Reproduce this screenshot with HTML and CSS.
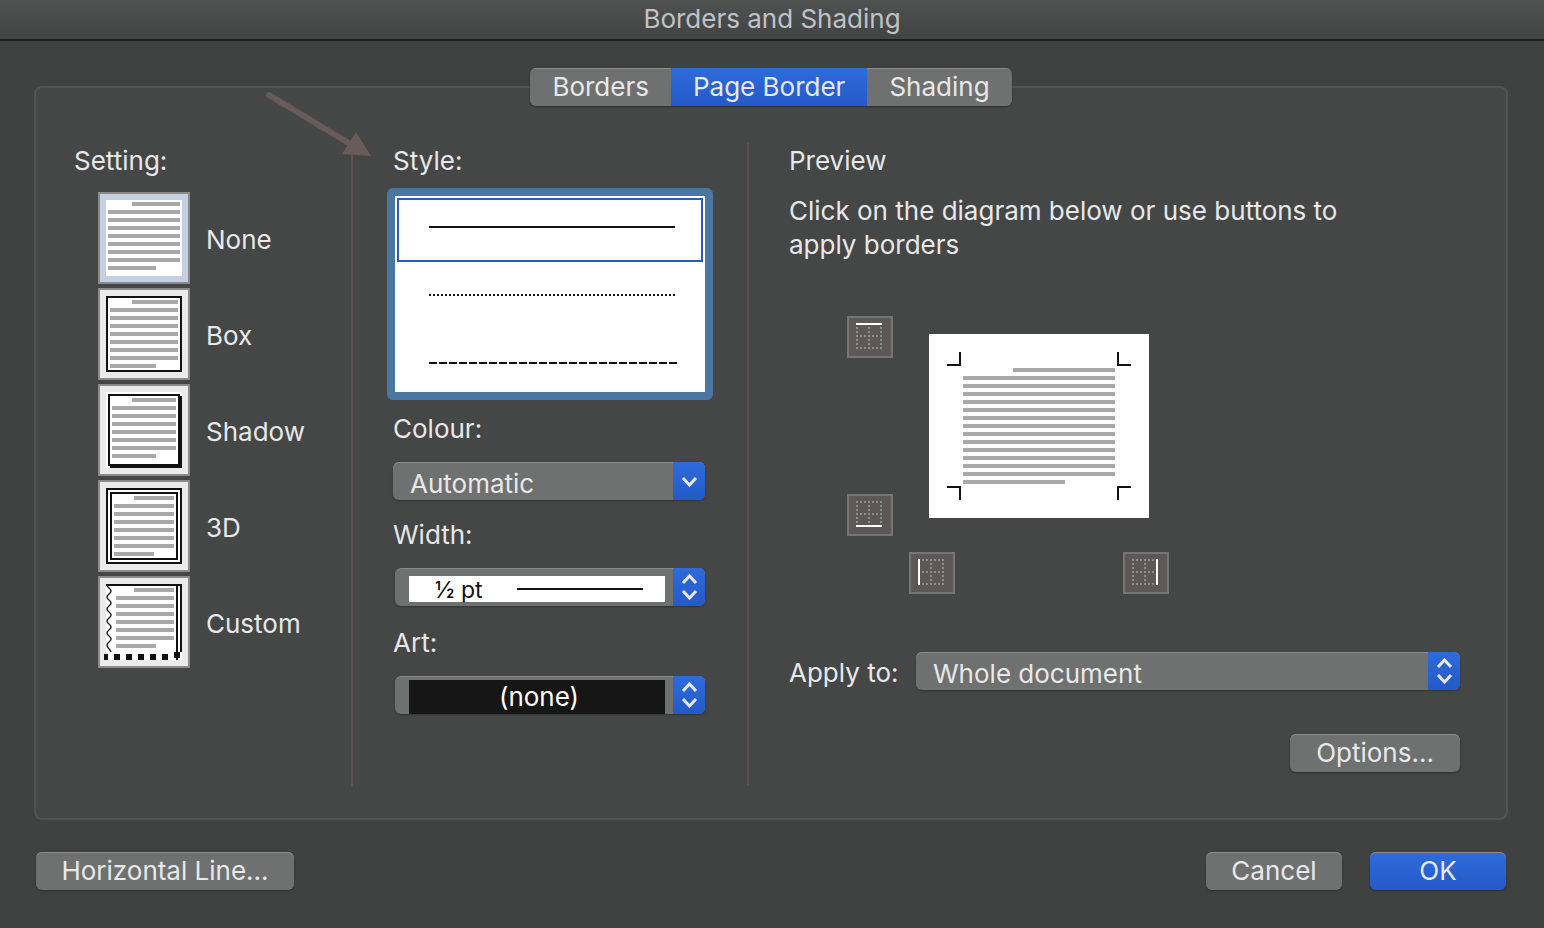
FILE: index.html
```
<!DOCTYPE html>
<html lang="en">
<head>
  <meta charset="UTF-8">
  <meta name="viewport" content="width=device-width, initial-scale=1.0">
  <title>Borders and Shading</title>
  <link rel="stylesheet" href="styles.css">
</head>
<body>
  <!-- Shared icons -->
  <svg class="sprite" aria-hidden="true">
    <symbol id="updown" viewBox="0 0 32 38">
      <path d="M10 15L16.500 8L23 15M10 23L16.500 30L23 23"/>
    </symbol>
    <symbol id="down" viewBox="0 0 32 38">
      <path d="M10 16L16.500 23L23 16"/>
    </symbol>
    <symbol id="cells" viewBox="0 0 46 42">
      <path d="M9 8H35M9 20H35M9 32H35M10 7V33M22 7V33M34 7V33" stroke="#8e8e8e" stroke-width="2" stroke-dasharray="2 2"/>
    </symbol>
  </svg>

  <header class="titlebar">
    <h1>Borders and Shading</h1>
  </header>

  <main>
    <div class="tabs" role="tablist">
      <button type="button" class="tab" role="tab">Borders</button>
      <button type="button" class="tab active" role="tab" aria-selected="true">Page Border</button>
      <button type="button" class="tab" role="tab">Shading</button>
    </div>

    <div class="panel">
      <svg class="pointer" viewBox="0 0 110 70" aria-hidden="true">
        <path d="M6 7L84 54" stroke="#685b59" stroke-width="6" stroke-linecap="round"/>
        <path d="M108 68L93 44L79 66Z" fill="#685b59"/>
      </svg>

      <section class="column settings">
        <h2>Setting:</h2>
        <div class="setting-list">
          <label class="setting">
            <input type="radio" name="setting" checked>
            <svg viewBox="0 0 92 92" class="thumb selected">
              <path d="M8 8H84V84H8Z" fill="#fff"/>
              <g stroke="#a9a9a9">
                <path d="M34 12H82M10 76H58" stroke-width="4"/>
                <path d="M46 18V70" stroke-width="72" stroke-dasharray="4 4"/>
              </g>
            </svg>
            <span>None</span>
          </label>
          <label class="setting">
            <input type="radio" name="setting">
            <svg viewBox="0 0 92 92" class="thumb">
              <path d="M9 9H83V83H9Z" fill="#fff" stroke="#111" stroke-width="2"/>
              <g stroke="#a9a9a9">
                <path d="M34 14H80M12 78H58" stroke-width="4"/>
                <path d="M46 20V72" stroke-width="68" stroke-dasharray="4 4"/>
              </g>
            </svg>
            <span>Box</span>
          </label>
          <label class="setting">
            <input type="radio" name="setting">
            <svg viewBox="0 0 92 92" class="thumb">
              <path d="M8 8H84V84H8Z" fill="#fff"/>
              <path d="M12 12H84V84H12Z" fill="#111"/>
              <path d="M11 11H81V81H11Z" fill="#fff" stroke="#111" stroke-width="2"/>
              <g stroke="#a9a9a9">
                <path d="M34 16H78M14 72H58" stroke-width="4"/>
                <path d="M46 22V66" stroke-width="64" stroke-dasharray="4 4"/>
              </g>
            </svg>
            <span>Shadow</span>
          </label>
          <label class="setting">
            <input type="radio" name="setting">
            <svg viewBox="0 0 92 92" class="thumb">
              <path d="M9 9H83V83H9ZM13 13H79V79H13Z" fill="#fff" stroke="#111" stroke-width="2"/>
              <g stroke="#a9a9a9">
                <path d="M36 18H76M16 74H56" stroke-width="4"/>
                <path d="M46 24V68" stroke-width="60" stroke-dasharray="4 4"/>
              </g>
            </svg>
            <span>3D</span>
          </label>
          <label class="setting">
            <input type="radio" name="setting">
            <svg viewBox="0 0 92 92" class="thumb">
              <path d="M8 8H84V84H8Z" fill="#fff"/>
              <path d="M8 9H84M79 8V84M83 8V76" stroke="#111" stroke-width="2"/>
              <path d="M9 9C9 12 13 12 13 15S9 18 9 21S13 24 13 27S9 30 9 33S13 36 13 39S9 42 9 45S13 48 13 51S9 54 9 57S13 60 13 63S9 66 9 69S12 73 13 76" stroke="#222" stroke-width="1.500"/>
              <path d="M6 78H10V84H6ZM16 78H22V84H16ZM28 78H34V84H28ZM40 78H46V84H40ZM52 78H58V84H52ZM64 78H70V84H64ZM76 76H82V82H76Z" fill="#111"/>
              <g stroke="#a9a9a9">
                <path d="M36 14H76M18 70H58" stroke-width="4"/>
                <path d="M47 20V64" stroke-width="58" stroke-dasharray="4 4"/>
              </g>
            </svg>
            <span>Custom</span>
          </label>
        </div>
      </section>

      <section class="column styles">
        <h2>Style:</h2>
        <div class="listbox">
          <label class="line-style selected">
            <input type="radio" name="line" aria-label="Solid" checked>
            <svg><path d="M30 27H276"/></svg>
          </label>
          <label class="line-style">
            <input type="radio" name="line" aria-label="Dotted">
            <svg><path d="M30 27H276" stroke-dasharray="2 2"/></svg>
          </label>
          <label class="line-style">
            <input type="radio" name="line" aria-label="Dashed">
            <svg><path d="M30 27H278" stroke-dasharray="8 2"/></svg>
          </label>
        </div>

        <div class="field">
          <label for="colour">Colour:</label>
          <div class="select">
            <select id="colour"><option>Automatic</option></select>
            <svg class="arrows"><use href="#down"/></svg>
          </div>
        </div>
        <div class="field swatch">
          <label for="width">Width:</label>
          <div class="select">
            <select id="width" class="width-select"><option>½ pt</option></select>
            <svg class="arrows"><use href="#updown"/></svg>
          </div>
        </div>
        <div class="field swatch">
          <label for="art">Art:</label>
          <div class="select">
            <select id="art" class="art-select"><option>(none)</option></select>
            <svg class="arrows"><use href="#updown"/></svg>
          </div>
        </div>
      </section>

      <section class="column preview">
        <h2>Preview</h2>
        <p>Click on the diagram below or use buttons to<br>apply borders</p>

        <div class="diagram">
          <div class="side-buttons">
            <button type="button" class="edge" aria-label="Top border">
              <svg viewBox="0 0 46 42"><use href="#cells"/><path d="M9 8H35" stroke="#fff" stroke-width="2"/></svg>
            </button>
            <button type="button" class="edge" aria-label="Bottom border">
              <svg viewBox="0 0 46 42"><use href="#cells"/><path d="M9 32H35" stroke="#fff" stroke-width="2"/></svg>
            </button>
          </div>
          <svg class="page" viewBox="0 0 220 184">
            <path d="M31 18V31H18M189 18V31H202M31 166V153H18M189 166V153H202" stroke="#111" stroke-width="2"/>
            <g stroke="#a9a9a9">
              <path d="M84 36H186M34 148H136" stroke-width="4"/>
              <path d="M110 42V142" stroke-width="152" stroke-dasharray="4 4"/>
            </g>
          </svg>
          <div class="bottom-buttons">
            <button type="button" class="edge" aria-label="Left border">
              <svg viewBox="0 0 46 42"><use href="#cells"/><path d="M10 7V33" stroke="#fff" stroke-width="2"/></svg>
            </button>
            <button type="button" class="edge" aria-label="Right border">
              <svg viewBox="0 0 46 42"><use href="#cells"/><path d="M34 7V33" stroke="#fff" stroke-width="2"/></svg>
            </button>
          </div>
        </div>

        <div class="apply">
          <label for="apply">Apply to:</label>
          <div class="select">
            <select id="apply"><option>Whole document</option></select>
            <svg class="arrows"><use href="#updown"/></svg>
          </div>
        </div>
        <button type="button" class="button options">Options...</button>
      </section>
    </div>
  </main>

  <footer>
    <button type="button" class="button wide">Horizontal Line...</button>
    <button type="button" class="button">Cancel</button>
    <button type="button" class="button primary">OK</button>
  </footer>
</body>
</html>
```

FILE: styles.css
```
* {
  box-sizing: border-box;
}
body {
  margin: 0;
  min-height: 100vh;
  display: flex;
  flex-direction: column;
  background-color: #404241;
  color: #e8e8ea;
  font-family: Inter, 'Liberation Sans', sans-serif;
  font-size: 26px;
  line-height: 38px;
}
h1, h2, p {
  margin: 0;
  font-size: 26px;
  font-weight: 400;
}
button, select {
  font: inherit;
  color: inherit;
  border: none;
  margin: 0;
}
svg {
  display: block;
  fill: none;
}
input[type="radio"] {
  position: absolute;
  opacity: 0;
}
.sprite {
  position: absolute;
  width: 0;
  height: 0;
}
.titlebar {
  height: 41px;
  border-bottom: 2px solid #1c1d1d;
  background: linear-gradient(#505251, #424443);
  color: #c0c2c8;
  text-align: center;
}
main {
  flex: 1;
  display: flex;
  flex-direction: column;
  padding: 27px 36px 0 34px;
}

/* Tabs */
.tabs {
  display: flex;
  align-self: center;
  z-index: 1;
  border-radius: 6px;
  overflow: hidden;
  box-shadow: 0 1px 2px #2c2d2d;
}
.tab {
  height: 38px;
  padding: 0 22px;
  background-color: #6f7170;
  box-shadow: inset 0 1px #8a8b8b;
}
.tab.active {
  background: linear-gradient(#2f6bdc, #2459c8);
  box-shadow: none;
}

/* Main panel */
.panel {
  position: relative;
  flex: 1;
  display: grid;
  grid-template-columns: 317px 396px 1fr;
  margin-top: -20px;
  padding: 54px 0 32px;
  border: 2px solid #525453;
  border-radius: 8px;
  background-color: #454746;
}
.pointer {
  position: absolute;
  left: 227px;
  top: 0;
  width: 110px;
  height: 70px;
}
.column {
  padding-left: 40px;
  border-right: 2px solid #5a5150;
}
.column.settings {
  padding-left: 38px;
}
.column.styles {
  padding-right: 42px;
}
.column.preview {
  display: flex;
  flex-direction: column;
  padding-right: 46px;
  border-right: none;
}

/* Settings */
.setting-list {
  display: grid;
  gap: 4px;
  margin: 12px 0 0 24px;
}
.setting {
  display: flex;
  align-items: center;
  gap: 16px;
}
.setting span {
  padding-top: 4px;
}
.thumb {
  width: 92px;
  height: 92px;
  background-color: #ebebeb;
  box-shadow: inset 0 0 0 2px #8b8b8b;
}
.thumb.selected {
  background-color: #c5cfe2;
}

/* Line styles */
.listbox {
  height: 212px;
  margin: 8px -8px 10px -6px;
  padding: 2px;
  display: grid;
  grid-auto-rows: 64px;
  gap: 4px;
  overflow: hidden;
  border: 8px solid #4a77a2;
  border-radius: 6px;
  background-color: #fff;
}
.line-style {
  border: 2px solid transparent;
}
.line-style.selected {
  border-color: #275bc9;
}
.line-style svg {
  width: 100%;
  height: 60px;
  stroke: #111;
  stroke-width: 2;
}

/* Fields */
.field {
  display: grid;
  gap: 14px;
  margin-bottom: 16px;
}
.field.swatch {
  margin-bottom: 18px;
}
.swatch .select {
  margin-left: 2px;
}
.select {
  display: grid;
  flex: 1;
}
.select select {
  grid-area: 1 / 1;
  appearance: none;
  width: 100%;
  height: 38px;
  padding: 3px 50px 0 17px;
  border-radius: 6px;
  background-color: #6f7170;
  box-shadow: inset 0 1px #8a8b8b, 0 1px 2px #333434;
}
.select .width-select {
  padding: 6px 50px 0 40px;
  color: #111;
  font-size: 23px;
  line-height: 28px;
  background-image: linear-gradient(#111, #111), linear-gradient(#fff, #fff);
  background-position: 122px 20px, 14px 8px;
  background-size: 126px 2px, 256px 26px;
  background-repeat: no-repeat;
}
.select .art-select {
  padding: 4px 36px 0 14px;
  color: #fff;
  line-height: 34px;
  text-align: center;
  text-align-last: center;
  background-image: linear-gradient(#161616, #161616);
  background-position: 14px 4px;
  background-size: 256px 34px;
  background-repeat: no-repeat;
}
.arrows {
  grid-area: 1 / 1;
  justify-self: end;
  width: 32px;
  height: 38px;
  border-radius: 0 6px 6px 0;
  background: linear-gradient(#2f6bdc, #2459c8);
  stroke: #e8e8ea;
  stroke-width: 3;
  pointer-events: none;
}

/* Preview */
.preview p {
  margin-top: 14px;
  line-height: 34px;
}
.diagram {
  display: grid;
  grid-template-columns: 46px 260px;
  grid-template-rows: 220px 42px;
  gap: 16px;
  margin: 54px 0 58px 58px;
}
.side-buttons {
  display: flex;
  flex-direction: column;
  justify-content: space-between;
}
.bottom-buttons {
  grid-column: 2;
  display: flex;
  justify-content: space-between;
}
.edge {
  width: 46px;
  height: 42px;
  padding: 0;
  background-color: #5b5857;
  box-shadow: inset 0 0 0 2px #747574;
}
.page {
  place-self: center;
  width: 220px;
  height: 184px;
  background-color: #fff;
}
.apply {
  display: flex;
}
.apply label {
  width: 127px;
  height: 38px;
  padding-top: 2px;
}

/* Buttons */
.button {
  min-width: 136px;
  height: 38px;
  padding: 0 25px;
  border-radius: 6px;
  background-color: #6f7170;
  box-shadow: inset 0 1px #8a8b8b, 0 1px 2px #2c2d2d;
}
.button.primary {
  background: linear-gradient(#2f6bdc, #2459c8);
}
.button.options {
  align-self: flex-end;
  min-width: 170px;
  margin-top: 44px;
}
.button.wide {
  min-width: 258px;
  margin-right: auto;
}
footer {
  display: flex;
  gap: 28px;
  padding: 32px 38px 38px 36px;
}
```
